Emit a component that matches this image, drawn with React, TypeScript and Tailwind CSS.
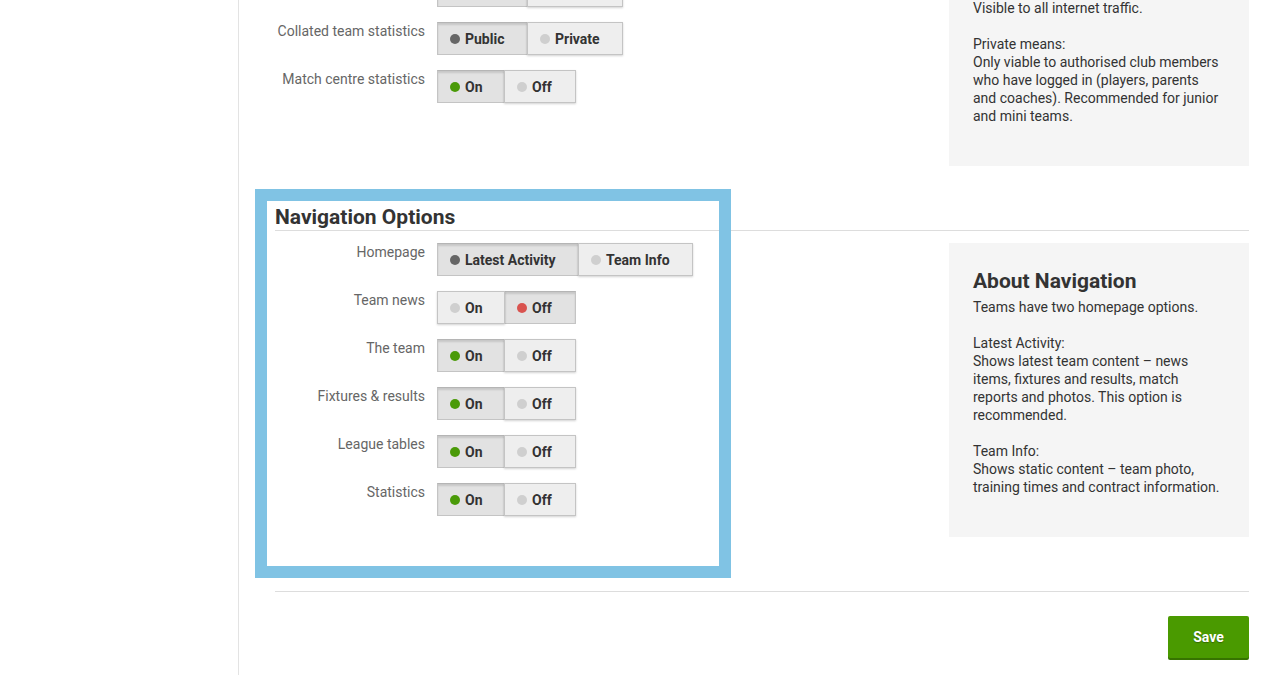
import React from "react";

function Toggle({ options, selected }: { options: { label: string; w: number; color: string }[]; selected: number }) {
  return (
    <div className="flex h-[33px]">
      {options.map((o, i) => {
        const sel = i === selected;
        return (
          <div
            key={o.label}
            style={{ width: o.w }}
            className={
              "flex items-center pl-[12px] border border-[#c4c4c4] " +
              (i > 0 ? "-ml-px " : "") +
              (sel
                ? "bg-[#e2e2e2] shadow-[inset_0_2px_2px_rgba(0,0,0,0.12)] border-t-[#b5b5b5] z-0"
                : "bg-[#eeeeee] shadow-[0_1px_2px_rgba(0,0,0,0.18)] z-10")
            }
          >
            <span
              className="w-[10px] h-[10px] rounded-full mr-[5px] shrink-0"
              style={{ backgroundColor: sel ? o.color : "#cfcfcf" }}
            />
            <span className="text-[14px] font-bold text-[#333] leading-none">{o.label}</span>
          </div>
        );
      })}
    </div>
  );
}

function Row({ label, children }: { label: string; children: React.ReactNode }) {
  return (
    <div className="flex items-start">
      <div className="w-[150px] text-right text-[14px] leading-[18px] text-[#666] mr-[12px]">{label}</div>
      {children}
    </div>
  );
}

const onOff = (sel: number, offColor = "#d9534f") => (
  <Toggle
    selected={sel}
    options={[
      { label: "On", w: 68, color: "#4a9a08" },
      { label: "Off", w: 72, color: offColor },
    ]}
  />
);

const pubPriv = (sel: number) => (
  <Toggle
    selected={sel}
    options={[
      { label: "Public", w: 91, color: "#666666" },
      { label: "Private", w: 96, color: "#666666" },
    ]}
  />
);

export default function App() {
  return (
    <div
      className="flex h-[675px] overflow-hidden bg-white text-[#333]"
      style={{ fontFamily: "Roboto, 'Liberation Sans', Arial, sans-serif" }}
    >
      <div className="w-[239px] shrink-0 border-r border-[#e3e3e3]" />
      <div className="relative flex-1 pl-[36px] pr-[32px]">
        <div className="-mt-[60px]">
          {/* top section (scrolled) */}
          <div className="flex justify-between">
            <div className="flex flex-col gap-[15px] pt-[34px]">
              <Row label="">{pubPriv(0)}</Row>
              <Row label="Collated team statistics">{pubPriv(0)}</Row>
              <Row label="Match centre statistics">{onOff(0)}</Row>
            </div>
            <div className="w-[300px] bg-[#f5f5f5] pl-[24px] pr-[28px] pt-[41px] pb-[41px] text-[14px] leading-[18px] text-[#333]">
              <p>Public means:</p>
              <p>Visible to all internet traffic.</p>
              <p className="mt-[18px]">Private means:</p>
              <p>
                Only viable to authorised club members who have logged in (players, parents and coaches). Recommended
                for junior and mini teams.
              </p>
            </div>
          </div>

          {/* navigation section */}
          <div className="mt-[39px]">
            <h2 className="text-[21px] font-bold leading-[24px] text-[#333] border-b border-[#dddddd] pb-[1px]">
              Navigation Options
            </h2>
            <div className="flex justify-between mt-[12px]">
              <div className="flex flex-col gap-[15px]">
                <Row label="Homepage">
                  <Toggle
                    selected={0}
                    options={[
                      { label: "Latest Activity", w: 142, color: "#666666" },
                      { label: "Team Info", w: 115, color: "#666666" },
                    ]}
                  />
                </Row>
                <Row label="Team news">{onOff(1)}</Row>
                <Row label="The team">{onOff(0)}</Row>
                <Row label="Fixtures & results">{onOff(0)}</Row>
                <Row label="League tables">{onOff(0)}</Row>
                <Row label="Statistics">{onOff(0)}</Row>
              </div>
              <div className="w-[300px] bg-[#f5f5f5] pl-[24px] pr-[28px] pt-[25px] pb-[41px] text-[14px] leading-[18px] text-[#333]">
                <h3 className="text-[21px] font-bold leading-[26px] mb-[4px]">About Navigation</h3>
                <p>Teams have two homepage options.</p>
                <p className="mt-[18px]">Latest Activity:</p>
                <p>
                  Shows latest team content – news items, fixtures and results, match reports and photos. This option is
                  recommended.
                </p>
                <p className="mt-[18px]">Team Info:</p>
                <p>Shows static content – team photo, training times and contract information.</p>
              </div>
            </div>
          </div>

          <div className="mt-[54px] border-t border-[#dddddd]" />
          <div className="flex justify-end mt-[24px]">
            <button className="w-[81px] h-[42px] rounded-[2px] bg-[#4a9a00] text-white text-[14px] font-bold shadow-[0_2px_0_#367300] [text-shadow:0_1px_1px_rgba(0,0,0,0.3)]">
              Save
            </button>
          </div>
        </div>

        {/* highlight overlay */}
        <div className="absolute left-[16px] top-[189px] w-[476px] h-[389px] border-[12px] border-[#80c3e4] pointer-events-none" />
      </div>
    </div>
  );
}
